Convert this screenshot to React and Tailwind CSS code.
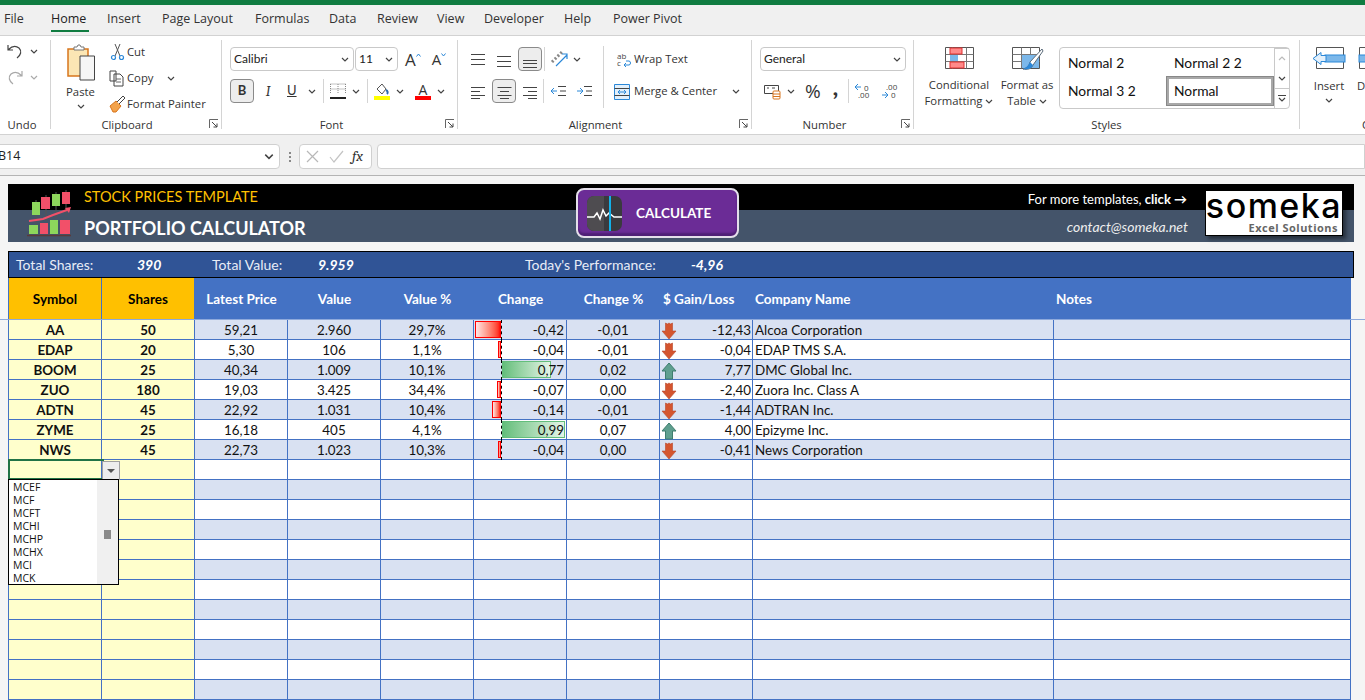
import React from "react";

const ui = { fontFamily: '"Open Sans", "Noto Sans", sans-serif' };
const cal = { fontFamily: 'Lato, "Noto Sans", sans-serif' };

const stocks = [
  { sym: "AA", shares: 50, price: "59,21", value: "2.960", pct: "29,7%", change: "-0,42", chg: "-0,01", up: false, gain: "-12,43", name: "Alcoa Corporation", bar: 26 },
  { sym: "EDAP", shares: 20, price: "5,30", value: "106", pct: "1,1%", change: "-0,04", chg: "-0,01", up: false, gain: "-0,04", name: "EDAP TMS S.A.", bar: 3 },
  { sym: "BOOM", shares: 25, price: "40,34", value: "1.009", pct: "10,1%", change: "0,77", chg: "0,02", up: true, gain: "7,77", name: "DMC Global Inc.", bar: 49 },
  { sym: "ZUO", shares: 180, price: "19,03", value: "3.425", pct: "34,4%", change: "-0,07", chg: "0,00", up: false, gain: "-2,40", name: "Zuora Inc. Class A", bar: 4 },
  { sym: "ADTN", shares: 45, price: "22,92", value: "1.031", pct: "10,4%", change: "-0,14", chg: "-0,01", up: false, gain: "-1,44", name: "ADTRAN Inc.", bar: 9 },
  { sym: "ZYME", shares: 25, price: "16,18", value: "405", pct: "4,1%", change: "0,99", chg: "0,07", up: true, gain: "4,00", name: "Epizyme Inc.", bar: 63 },
  { sym: "NWS", shares: 45, price: "22,73", value: "1.023", pct: "10,3%", change: "-0,04", chg: "0,00", up: false, gain: "-0,41", name: "News Corporation", bar: 3 },
];

const tickers = ["MCEF", "MCF", "MCFT", "MCHI", "MCHP", "MCHX", "MCI", "MCK"];
const widths = ["w-[94px]", "w-[93px]", "w-[93px]", "w-[93px]", "w-[93px]", "w-[93px]", "w-[93px]", "w-[93px]", "w-[301px]", "w-[297px]"];

const Ic = ({ w, h, className = "", children }) => (
  <svg width={w} height={h} viewBox={`0 0 ${w} ${h}`} fill="none" className={`shrink-0 overflow-visible ${className}`}>
    {children}
  </svg>
);

const Chev = ({ className = "", color = "#444" }) => (
  <Ic w={8} h={5} className={className}>
    <path d="M1 1l3 3 3-3" stroke={color} strokeWidth="1.2" />
  </Ic>
);

const Sep = () => <div className="w-px h-[89px] mt-1 bg-[#d4d4d4] shrink-0" />;
const MiniSep = ({ className = "" }) => <div className={`w-px h-6 bg-[#d4d4d4] shrink-0 ${className}`} />;

const Launcher = ({ className }) => (
  <Ic w={10} h={10} className={`absolute top-[2px] ${className}`}>
    <path d="M0.5 9V0.5H9" stroke="#666" />
    <path d="M3 3l5 5M8 4.5V8H4.5" stroke="#444" />
  </Ic>
);

const Group = ({ w, label, labelPad = "", launcher, children }) => (
  <div className={`${w} h-[98px] flex flex-col shrink-0`}>
    <div className="h-[81px] pt-[4px] relative">{children}</div>
    <div className={`h-[16px] leading-[16px] text-[11.3px] text-[#333] text-center relative ${labelPad}`}>
      {label}
      {launcher && <Launcher className={launcher} />}
    </div>
  </div>
);

const Combo = ({ w, text }) => (
  <div className={`${w} h-6 border border-[#c9c9c9] rounded-[4px] bg-white flex items-center justify-between pl-[3px] pr-[4px] text-[12px] text-[#222]`}>
    <span style={cal}>{text}</span>
    <Chev />
  </div>
);

const AlignIcon = ({ ys, mode = "top" }) => {
  const long = 14;
  return (
    <Ic w={15} h={17}>
      {ys.map((y, i) => {
        const l = i % 2 === 1 && mode !== "full" ? 9 : long;
        const x = mode === "center" ? (15 - l) / 2 : mode === "right" ? 15 - l : 0;
        return <path key={i} d={`M${x} ${y}.5h${l}`} stroke="#444" />;
      })}
    </Ic>
  );
};

const Undo = ({ color }) => (
  <Ic w={16} h={16}>
    <path d="M1 2v5h5M1.5 6.5C5 3 9 2.500 12 5c3 3 2 7-2 10" stroke={color} strokeWidth="1.2" />
  </Ic>
);

const Arrow = ({ up }) =>
  up ? (
    <Ic w={16} h={18}>
      <path d="M8 1l7 8h-3.500v8h-7V9H1z" fill="#5f9f8f" stroke="#3f7d6e" />
    </Ic>
  ) : (
    <Ic w={16} h={18}>
      <path d="M4.500 1l2 1 1.500-1 1.500 1 2-1v8H15l-7 8-7-8h3.500z" fill="#d4552f" stroke="#b9462a" strokeWidth="0.6" />
    </Ic>
  );

const DataBar = ({ item }) =>
  item.up ? (
    <div
      className="absolute left-[28px] top-px h-[17px] border border-[#63be7b] bg-gradient-to-r from-[#63be7b] to-[#e4f4e8]"
      style={{ width: item.bar }}
    />
  ) : (
    <div
      className="absolute right-[65px] top-px h-[17px] border border-[#ff0000] bg-gradient-to-l from-[#ff0000] to-[#ffe5e5]"
      style={{ width: item.bar }}
    />
  );

const Candles = () => (
  <Ic w={44} h={47} className="absolute left-[19px] top-[6px]">
    <path d="M9 10v26M19 5v26M29 2v26M39 0v26" stroke="#555" />
    <rect x="5" y="12" width="8" height="13" fill="#8dd65c" />
    <rect x="14" y="7" width="9" height="12" fill="#f25069" />
    <rect x="25" y="4" width="8" height="12" fill="#8dd65c" />
    <rect x="35" y="2" width="8" height="12" fill="#f25069" />
    <path d="M2 31l14-2 10-4 14-5" stroke="#f25069" strokeWidth="2" />
    <path d="M38 18l6-1-2 6z" fill="#f25069" />
    <rect x="2" y="35" width="9" height="9" fill="#8dd65c" />
    <rect x="13" y="33" width="8" height="11" fill="#f25069" />
    <rect x="23" y="30" width="8" height="14" fill="#8dd65c" />
    <rect x="33" y="30" width="10" height="14" fill="#f25069" />
    <path d="M0 45.500h44" stroke="#5a3a3a" strokeWidth="1.500" />
  </Ic>
);

const Tabs = () => (
  <div className="h-[31px] bg-[#f0f0f0] border-b border-[#d2d2d2] flex items-center text-[12.5px] text-[#333] pl-1 pb-[1px] shrink-0" style={ui}>
    <span className="w-[47px]">File</span>
    <span className="w-[56px] relative font-medium text-[#222]">
      Home
      <span className="absolute left-0 top-[20px] w-[38px] h-[2px] bg-[#107c41]" />
    </span>
    <span className="w-[55px]">Insert</span>
    <span className="w-[93px]">Page Layout</span>
    <span className="w-[74px]">Formulas</span>
    <span className="w-[48px]">Data</span>
    <span className="w-[60px]">Review</span>
    <span className="w-[47px]">View</span>
    <span className="w-[80px]">Developer</span>
    <span className="w-[49px]">Help</span>
    <span>Power Pivot</span>
  </div>
);

const Ribbon = () => (
  <div className="h-[98px] bg-white flex text-[11.3px] text-[#333] overflow-hidden shrink-0" style={ui}>
    <Group w="w-[50px]" label="Undo" labelPad="pr-[6px]">
      <div className="pl-[7px] pt-[3px] flex items-center gap-[7px]">
        <Undo color="#444" />
        <Chev />
      </div>
      <div className="pl-[7px] pt-[10px] flex items-center gap-[7px]">
        <div className="-scale-x-100">
          <Undo color="#a8a8a8" />
        </div>
        <Chev color="#aaa" />
      </div>
    </Group>
    <Sep />
    <Group w="w-[170px]" label="Clipboard" launcher="right-[2px]" labelPad="pr-[18px]">
      <div className="flex">
        <div className="w-[58px] flex flex-col items-center pt-[4px] pl-[1px]">
          <Ic w={30} h={38}>
            <path d="M2 5h20v27H2z" fill="#fbe6b4" stroke="#d8751c" strokeWidth="1.500" />
            <path d="M8 6V3h3l1-2h2l1 2h3v3z" fill="#fff" stroke="#777" />
            <path d="M14 12h14.500v24H14z" fill="#f6f6f6" stroke="#444" />
          </Ic>
          <span className="mt-[1px] leading-[18px]">Paste</span>
          <Chev className="mt-[3px]" />
        </div>
        <div className="flex flex-col gap-[4px] pt-[1px]">
          <div className="h-[22px] flex items-center">
            <Ic w={18} h={18}>
              <path d="M6 1l5 12M11 1L6 13" stroke="#555" />
              <circle cx="4.500" cy="14.500" r="2" stroke="#2b88d8" strokeWidth="1.200" />
              <circle cx="12.500" cy="14.500" r="2" stroke="#2b88d8" strokeWidth="1.200" />
            </Ic>
            <span>Cut</span>
          </div>
          <div className="h-[22px] flex items-center">
            <Ic w={18} h={18}>
              <path d="M1 2h6v10H1zM5 5h6l3 3v9H5z" fill="#fff" stroke="#444" />
              <path d="M7 10h5M7 13h5" stroke="#666" />
            </Ic>
            <span>Copy</span>
            <Chev className="ml-[14px]" />
          </div>
          <div className="h-[22px] flex items-center">
            <Ic w={18} h={18}>
              <path d="M1 11l6-5 5 5-5 6H4l-1-2z" fill="#f3a24a" stroke="#d8751c" />
              <path d="M8 7l6-6 2 2-6 6" fill="#fff" stroke="#444" />
            </Ic>
            <span>Format Painter</span>
          </div>
        </div>
      </div>
    </Group>
    <Sep />
    <Group w="w-[235px]" label="Font" launcher="right-[2px]" labelPad="pr-[16px]">
      <div className="pl-[8px] pt-[7px] flex items-center">
        <Combo w="w-[124px]" text="Calibri" />
        <div className="ml-[1px]">
          <Combo w="w-[43px]" text="11" />
        </div>
        <span className="ml-[7px] text-[17px] leading-none">A</span>
        <Ic w={5} h={4} className="mb-[9px]">
          <path d="M0.500 3.500L2.500 1l2 2.500" stroke="#2b88d8" />
        </Ic>
        <span className="ml-[11px] text-[15px] leading-none">A</span>
        <Ic w={5} h={4} className="mb-[9px]">
          <path d="M0.500 0.500L2.500 3l2-2.500" stroke="#2b88d8" />
        </Ic>
      </div>
      <div className="pl-[8px] pt-[8px] flex items-center">
        <div className="w-6 h-6 border border-[#8a8a8a] rounded-[4px] bg-[#ededed] flex items-center justify-center font-bold text-[13px]" style={cal}>B</div>
        <span className="ml-[6px] w-[16px] italic text-[14px] text-center font-serif">I</span>
        <span className="ml-[11px] w-[12px] underline text-[13px]" style={cal}>U</span>
        <Chev className="ml-[9px]" />
        <MiniSep className="ml-[7px]" />
        <Ic w={16} h={16} className="ml-[6px]">
          <path d="M0.500 1h15M0.500 6h15M0.500 1v10M8 1v10M15.500 1v10" stroke="#888" strokeDasharray="1 1" />
          <path d="M0 15h16" stroke="#222" strokeWidth="2" />
        </Ic>
        <Chev className="ml-[6px]" />
        <MiniSep className="ml-[7px]" />
        <div className="ml-[6px] w-4 flex flex-col items-center">
          <Ic w={16} h={13}>
            <path d="M3 6l5-5 4 5-4 5z" stroke="#555" />
            <path d="M12 7c2 1 2 3 1 4" stroke="#2b6cb0" strokeWidth="2" />
          </Ic>
          <div className="w-4 h-1 bg-[#ffff00]" />
        </div>
        <Chev className="ml-[6px]" />
        <div className="ml-[11px] w-4 flex flex-col items-center">
          <span className="text-[14px] leading-[13px] h-[13px]">A</span>
          <div className="w-4 h-1 bg-[#ff0000]" />
        </div>
        <Chev className="ml-[6px]" />
      </div>
    </Group>
    <Sep />
    <Group w="w-[293px]" label="Alignment" launcher="right-[2px]" labelPad="pr-[18px]">
      <div className="pl-[13px] pt-[7px] flex items-center">
        <AlignIcon ys={[3, 8, 13]} mode="full" />
        <div className="ml-[11px]">
          <AlignIcon ys={[5, 10, 15]} mode="full" />
        </div>
        <div className="ml-[6px] w-6 h-6 border border-[#8a8a8a] rounded-[4px] bg-[#ededed] flex items-center justify-center">
          <AlignIcon ys={[9, 12, 16]} mode="full" />
        </div>
        <MiniSep className="ml-[2px]" />
        <Ic w={18} h={16} className="ml-[6px]">
          <path d="M1 11L11 1" stroke="#888" strokeWidth="3" strokeDasharray="2 2" />
          <path d="M5 15L16 4M11 3h5v5" stroke="#2b88d8" strokeWidth="1.200" />
        </Ic>
        <Chev className="ml-[4px]" />
        <div className="ml-[35px] pt-[1px] flex items-center gap-[2px]">
          <Ic w={16} h={16}>
            <text x="1" y="7" fontSize="8" fill="#444">ab</text>
            <text x="1" y="14" fontSize="8" fill="#444">c</text>
            <path d="M8 13h5c2 0 2-4 0-4h-3M10 11l-2 2 2 2" stroke="#2b88d8" />
          </Ic>
          <span>Wrap Text</span>
        </div>
      </div>
      <div className="pl-[13px] pt-[8px] flex items-center">
        <AlignIcon ys={[4, 8, 12, 15]} />
        <div className="ml-[6px] w-6 h-6 border border-[#8a8a8a] rounded-[4px] bg-[#ededed] flex items-center justify-center">
          <AlignIcon ys={[4, 8, 12, 15]} mode="center" />
        </div>
        <div className="ml-[6px]">
          <AlignIcon ys={[4, 8, 12, 15]} mode="right" />
        </div>
        <MiniSep className="ml-[6px]" />
        <Ic w={15} h={14} className="ml-[7px]">
          <path d="M7 2.500h8M9 7h6M7 11.500h8" stroke="#444" />
          <path d="M0 7h6M3 4L0 7l3 3" stroke="#2b88d8" />
        </Ic>
        <Ic w={15} h={14} className="ml-[11px]">
          <path d="M7 2.500h8M9 7h6M7 11.500h8" stroke="#444" />
          <path d="M0 7h6M3 4l3 3-3 3" stroke="#2b88d8" />
        </Ic>
        <div className="ml-[22px] pt-[1px] flex items-center gap-[3px]">
          <Ic w={17} h={16}>
            <path d="M0.500 0.500h15v15h-15z" fill="#e3f0fb" stroke="#2b88d8" />
            <path d="M0.500 4.500h15M0.500 11.500h15" stroke="#444" />
            <path d="M4 8h8M6 6L4 8l2 2M10 6l2 2-2 2" stroke="#2b88d8" />
          </Ic>
          <span>Merge &amp; Center</span>
          <Chev className="ml-[12px]" />
        </div>
      </div>
      <div className="absolute left-[145px] top-[10px] w-px h-[62px] bg-[#d4d4d4]" />
    </Group>
    <Sep />
    <Group w="w-[161px]" label="Number" launcher="right-[2px]" labelPad="pr-[16px]">
      <div className="pl-[8px] pt-[7px]">
        <Combo w="w-[146px]" text="General" />
      </div>
      <div className="pl-[12px] pt-[8px] flex items-center">
        <Ic w={17} h={16}>
          <path d="M0.500 2.500h14v8h-14z" stroke="#444" />
          <path d="M3 5h2M8 5h3" stroke="#444" />
          <rect x="9" y="8" width="7" height="8" rx="1" fill="#fff" stroke="#d8751c" />
          <path d="M9 11h7M9 13.500h7" stroke="#d8751c" />
        </Ic>
        <Chev className="ml-[6px]" />
        <span className="ml-[10px] text-[19px] leading-none">%</span>
        <span className="ml-[12px] text-[24px] leading-none font-bold font-serif -mt-[6px]">,</span>
        <MiniSep className="ml-[10px]" />
        <Ic w={17} h={16} className="ml-[6px]">
          <path d="M0 4h6M3 1L0 4l3 3" stroke="#2b88d8" />
          <text x="9" y="8" fontSize="8" fill="#444">0</text>
          <text x="3" y="15" fontSize="8" fill="#444">.00</text>
        </Ic>
        <Ic w={17} h={16} className="ml-[10px]">
          <text x="4" y="7" fontSize="8" fill="#444">.00</text>
          <path d="M0 12h6M3 9l3 3-3 3" stroke="#2b88d8" />
          <text x="9" y="15" fontSize="8" fill="#444">0</text>
        </Ic>
      </div>
    </Group>
    <Sep />
    <Group w="w-[385px]" label="Styles">
      <div className="flex pt-[7px]">
        <div className="w-[90px] flex flex-col items-center text-center leading-[16px]">
          <Ic w={29} h={23}>
            <path d="M0.500 0.500h28v21h-28z" stroke="#555" />
            <path d="M0.500 7.500h28M0.500 14.500h28M7.500 0.500v21M21.500 0.500v21" stroke="#777" />
            <rect x="5" y="1" width="12" height="6" fill="#ff8a8a" stroke="#e03030" />
            <rect x="5" y="15" width="14" height="6" fill="#ff8a8a" stroke="#e03030" />
            <rect x="5" y="8" width="8" height="6" fill="#7cb8ea" />
          </Ic>
          <span className="mt-[7px]">Conditional</span>
          <span className="flex items-center gap-[3px]">Formatting <Chev /></span>
        </div>
        <div className="w-[46px] flex flex-col items-center text-center leading-[16px]">
          <Ic w={31} h={23}>
            <path d="M0.500 0.500h27v21h-27z" stroke="#555" />
            <path d="M0.500 7.500h27M0.500 14.500h27M9.500 0.500v21M18.500 0.500v21" stroke="#777" />
            <rect x="10" y="8" width="17" height="13" fill="#7cb8ea" />
            <path d="M30 2L18 15c-1 4-3 6-7 7 4 1 9 0 10-4L31 4z" fill="#fff" stroke="#5b6b7a" />
            <path d="M11 22c3-1 5-3 7-7l3 3c-1 4-6 5-10 4z" fill="#2b88d8" />
          </Ic>
          <span className="mt-[7px] whitespace-nowrap">Format as</span>
          <span className="flex items-center gap-[3px]">Table <Chev /></span>
        </div>
        <div className="ml-[9px] w-[231px] h-[62px] border border-[#c9c9c9] rounded-[4px] flex text-[13.8px] text-[#111]" style={cal}>
          <div className="w-[214px] grid grid-cols-[107px_107px] grid-rows-[28px_28px] pt-[1px]">
            <div className="pl-[8px] flex items-center">Normal 2</div>
            <div className="pl-[7px] flex items-center">Normal 2 2</div>
            <div className="pl-[8px] flex items-center">Normal 3 2</div>
            <div className="w-[106px] border-2 border-[#a8a8a8] outline outline-1 outline-[#888] bg-white pl-[5px] flex items-center">Normal</div>
          </div>
          <div className="w-[15px] border-l border-[#c9c9c9] flex flex-col">
            <div className="h-[21px] flex items-center justify-center border-b border-[#c9c9c9] rotate-180"><Chev color="#bbb" /></div>
            <div className="h-[20px] flex items-center justify-center border-b border-[#c9c9c9]"><Chev /></div>
            <div className="h-[19px] flex flex-col items-center justify-center"><div className="w-2 h-px bg-[#444] mb-[1px]" /><Chev /></div>
          </div>
        </div>
      </div>
    </Group>
    <Sep />
    <div className="w-[65px] h-[98px] relative shrink-0 overflow-hidden">
      <div className="flex pt-[11px] pl-[13px] gap-[14px]">
        <div className="w-[32px] flex flex-col items-center">
          <Ic w={32} h={22}>
            <path d="M3.500 0.500h27v21h-27z" stroke="#555" />
            <rect x="12" y="8" width="20" height="7" fill="#7cb8ea" stroke="#2b88d8" />
            <path d="M0 11.500l8-6v3h5v6H8v3z" fill="#e3f0fb" stroke="#2b88d8" />
          </Ic>
          <span className="mt-[9px] leading-[16px]">Insert</span>
          <Chev className="mt-[4px]" />
        </div>
        <div className="w-[20px]">
          <Ic w={20} h={22}>
            <path d="M0.500 0.500h20v21h-20z" stroke="#555" />
            <rect x="0" y="8" width="20" height="7" fill="#7cb8ea" stroke="#2b88d8" />
          </Ic>
          <span className="block mt-[9px] leading-[16px] -ml-[2px]">De</span>
        </div>
      </div>
      <span className="absolute left-[62px] top-[81px] text-[11.3px]">C</span>
    </div>
  </div>
);

const FormulaBar = () => (
  <div className="h-[42px] bg-[#f0f0f0] border-t border-[#d2d2d2] border-b border-b-[#b4b4b4] pt-[9px] flex items-start shrink-0" style={ui}>
    <div className="w-[281px] h-[25px] -ml-[1px] bg-white border border-[#d0d0d0] rounded-r-[4px] flex items-center justify-between pr-[6px] text-[12.500px] text-[#222] overflow-hidden">
      <span className="-ml-[2px]">B14</span>
      <Chev className="scale-125" />
    </div>
    <div className="w-[19px] h-[25px] flex flex-col items-center justify-center gap-[2px]">
      <div className="w-[2px] h-[2px] bg-[#888]" />
      <div className="w-[2px] h-[2px] bg-[#888]" />
      <div className="w-[2px] h-[2px] bg-[#888]" />
    </div>
    <div className="w-[73px] h-[25px] bg-white border border-[#d0d0d0] rounded-[4px] flex items-center pl-[6px]">
      <Ic w={13} h={13}>
        <path d="M1 1l11 11M12 1L1 12" stroke="#b8b8b8" strokeWidth="1.200" />
      </Ic>
      <Ic w={15} h={13} className="ml-[10px]">
        <path d="M1 7l4 5 9-11" stroke="#c4c4c4" strokeWidth="1.200" />
      </Ic>
      <span className="ml-[8px] font-serif italic text-[15px] leading-none text-[#333]">fx</span>
    </div>
    <div className="flex-1 ml-[5px] h-[25px] bg-white border border-[#d0d0d0] rounded-l-[4px]" />
  </div>
);

const Banner = () => (
  <div className="ml-2 w-[1346px] h-[58px] relative shrink-0" style={cal}>
    <div className="h-[26px] bg-black flex items-center justify-between pl-[76px] pr-[167px]">
      <span className="text-[#ffc000] text-[14.500px]">STOCK PRICES TEMPLATE</span>
      <span className="text-white text-[13px] mt-[6px]">For more templates, <b>click →</b></span>
    </div>
    <div className="h-[32px] bg-[#44546a] flex items-center justify-between pt-[4px] pl-[76px] pr-[166px]">
      <span className="text-white text-[18px] font-bold">PORTFOLIO CALCULATOR</span>
      <span className="text-[#eee] text-[14px] italic mb-[4px]">contact@someka.net</span>
    </div>
    <Candles />
    <div className="absolute left-[568px] top-[4px] w-[163px] h-[50px] rounded-[8px] border-2 border-[#e4dfea] bg-[#6b2c96] shadow-[inset_0_-3px_2px_#4f1f75] flex items-center pl-[9px]">
      <div className="w-[35px] h-[35px] rounded-[7px] bg-[#3a3a3e] overflow-hidden">
        <Ic w={35} h={35}>
          <rect width="17" height="35" fill="#4e4c50" />
          <path d="M0 21h7l3-4 3 6 3-9 3 6 3-3 5 4h8" stroke="#fff" strokeWidth="1.500" />
          <path d="M23 0v35" stroke="#12b0e8" strokeWidth="2" />
        </Ic>
      </div>
      <span className="ml-[14px] text-white font-bold text-[13.500px]">CALCULATE</span>
    </div>
    <div className="absolute left-[1197px] top-[6px] w-[138px] h-[46px] bg-white border border-black shadow-[3px_3px_4px_rgba(0,0,0,0.45)] flex flex-col items-center overflow-hidden">
      <span className="text-[34px] leading-[30px] h-[30px] font-medium text-black tracking-[1.500px]" style={{ fontFamily: "Inter, sans-serif" }}>someka</span>
      <span className="self-end pr-[4px] text-[11px] leading-[14px] font-bold text-[#666] tracking-[0.500px]" style={{ fontFamily: '"Open Sans", sans-serif' }}>Excel Solutions</span>
    </div>
  </div>
);

const Summary = () => (
  <div className="ml-2 w-[1346px] h-[27px] mt-[9px] bg-[#305496] border border-black flex items-center text-white text-[14px] shrink-0" style={cal}>
    <span className="ml-[7px] w-[121px] text-[#e8edf6]">Total Shares:</span>
    <span className="w-[75px] font-bold italic">390</span>
    <span className="w-[106px] text-[#e8edf6]">Total Value:</span>
    <span className="w-[207px] font-bold italic">9.959</span>
    <span className="w-[166px] text-[#e8edf6]">Today's Performance:</span>
    <span className="font-bold italic">-4,96</span>
  </div>
);

const Header = () => {
  const labels = ["Symbol", "Shares", "Latest Price", "Value", "Value %", "Change", "Change %"];
  return (
    <div className="h-[42px] border-b border-[#8ea9db] pl-2 flex shrink-0 font-bold text-[13.500px]" style={cal}>
      {labels.map((l, i) => (
        <div
          key={l}
          className={`${widths[i]} h-[41px] pt-[2px] flex items-center justify-center ${i < 2 ? "bg-[#ffc000] text-black border-l border-r border-[#4472c4]" : "bg-[#4472c4] text-white"} ${i === 1 ? "border-l-0" : ""}`}
        >
          {l}
        </div>
      ))}
      <div className="w-[93px] h-[41px] pt-[2px] bg-[#4472c4] text-white flex items-center pl-[3px]">$ Gain/Loss</div>
      <div className="w-[301px] h-[41px] pt-[2px] bg-[#4472c4] text-white flex items-center pl-[2px]">Company Name</div>
      <div className="w-[297px] h-[41px] pt-[2px] bg-[#4472c4] text-white flex items-center pl-[2px]">Notes</div>
    </div>
  );
};

const Dropdown = () => (
  <>
    <div className="absolute -left-px -top-px w-[96px] h-[21px] border-2 border-[#217346] z-10" />
    <div className="absolute left-[93px] top-px w-[18px] h-[19px] bg-[#ededed] border border-[#a0a0a0] z-20 flex items-center justify-center">
      <div className="w-0 h-0 border-l-[4px] border-r-[4px] border-t-[4px] border-l-transparent border-r-transparent border-t-[#555]" />
    </div>
    <div className="absolute -left-px top-[19px] w-[111px] h-[106px] bg-white border border-black z-20 flex" style={ui}>
      <div className="w-[88px] pl-[4px] pt-[1px] text-[10.500px] leading-[13px] text-[#111] font-normal text-left">
        {tickers.map((t) => (
          <div key={t} className="h-[13px]">{t}</div>
        ))}
      </div>
      <div className="flex-1 bg-[#f0f0f0] pl-[7px] pt-[50px]">
        <div className="w-[7px] h-[9px] bg-[#8a8a8a]" />
      </div>
    </div>
  </>
);

const Row = ({ item, index }) => {
  const shade = index % 2 === 0 ? "bg-[#d9e1f2]" : "bg-white";
  const cell = "h-5 pt-[2px] border-r border-b border-[#4472c4] flex items-center relative shrink-0";
  const yellow = "bg-[#ffffcc] justify-center font-bold";
  return (
    <div className="flex h-5 pl-2 text-[13.400px] text-[#111] shrink-0">
      <div className={`${widths[0]} ${cell} ${yellow} border-l`}>
        {item?.sym}
        {index === 7 && <Dropdown />}
      </div>
      <div className={`${widths[1]} ${cell} ${yellow}`}>{item?.shares}</div>
      <div className={`${widths[2]} ${cell} ${shade} justify-center`}>{item?.price}</div>
      <div className={`${widths[3]} ${cell} ${shade} justify-center`}>{item?.value}</div>
      <div className={`${widths[4]} ${cell} ${shade} justify-center`}>{item?.pct}</div>
      <div className={`${widths[5]} ${cell} ${shade} justify-end pr-[2px]`}>
        {item && <DataBar item={item} />}
        {item && <div className="absolute left-[27px] top-0 h-5 border-l border-dashed border-black" />}
        <span className="relative">{item?.change}</span>
      </div>
      <div className={`${widths[6]} ${cell} ${shade} justify-center`}>{item?.chg}</div>
      <div className={`${widths[7]} ${cell} ${shade} justify-between pl-[1px] pr-[1px]`}>
        {item && <Arrow up={item.up} />}
        <span>{item?.gain}</span>
      </div>
      <div className={`${widths[8]} ${cell} ${shade} pl-[2px]`}>{item?.name}</div>
      <div className={`${widths[9]} ${cell} ${shade}`} />
    </div>
  );
};

export default function App() {
  const rows = Array.from({ length: 19 }, (_, i) => stocks[i]);
  return (
    <div className="w-[1365px] h-[700px] overflow-hidden flex flex-col bg-[#f5f5f5]" style={cal}>
      <div className="h-[5px] bg-[#107c41] shrink-0" />
      <Tabs />
      <Ribbon />
      <FormulaBar />
      <div className="h-[8px] shrink-0" />
      <Banner />
      <Summary />
      <Header />
      {rows.map((item, i) => (
        <Row key={i} item={item} index={i} />
      ))}
    </div>
  );
}
